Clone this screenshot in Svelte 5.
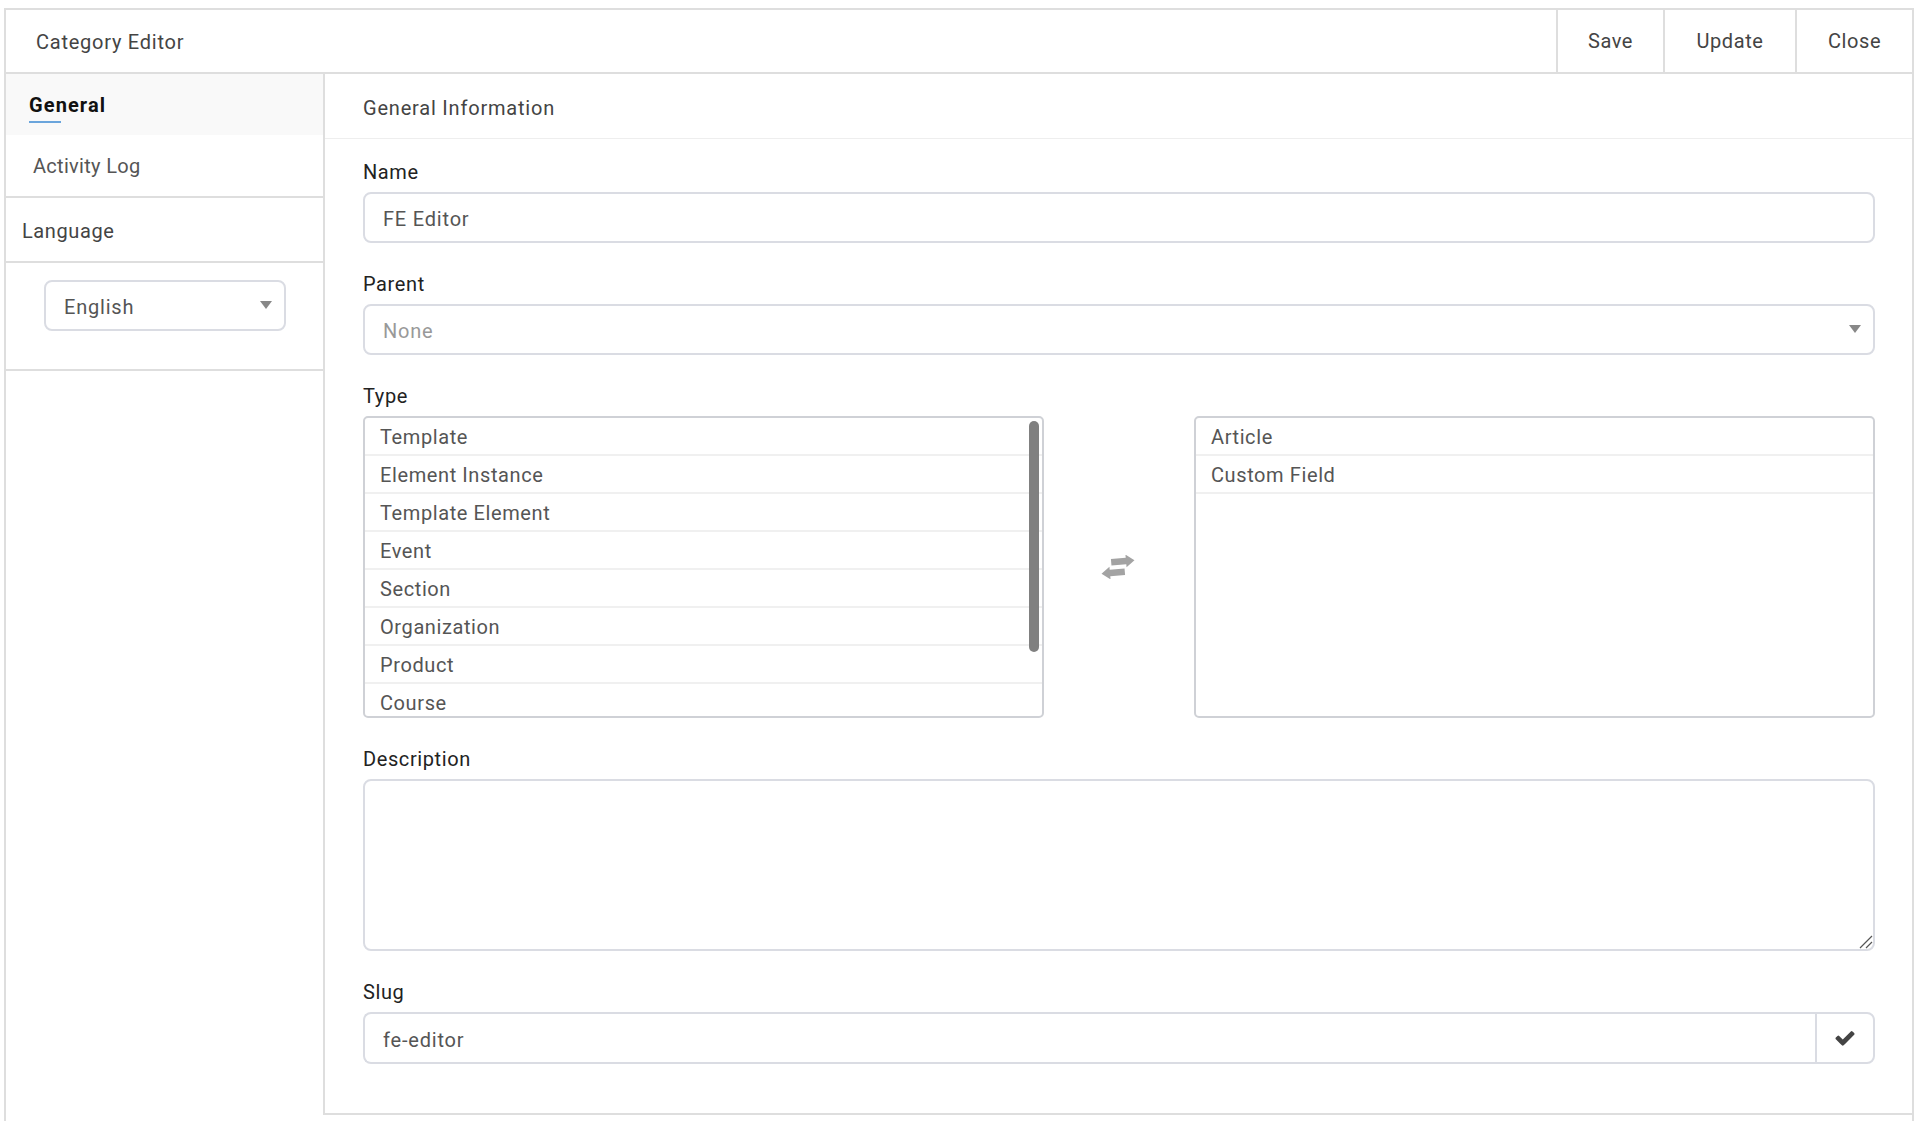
<script>
  const available = [
    "Template",
    "Element Instance",
    "Template Element",
    "Event",
    "Section",
    "Organization",
    "Product",
    "Course",
  ];
  const selected = ["Article", "Custom Field"];
</script>

<div class="frame">
  <header class="topbar">
    <h1>Category Editor</h1>
    <div class="actions">
      <button>Save</button>
      <button class="update">Update</button>
      <button class="close">Close</button>
    </div>
  </header>

  <div class="main">
    <aside class="sidebar">
      <nav>
        <a class="tab active" href="#general"><span>General</span></a>
        <a class="tab" href="#log">Activity Log</a>
      </nav>
      <div class="side-title">Language</div>
      <div class="side-body">
        <div class="select small">
          <select>
            <option>English</option>
          </select>
          <i class="caret"></i>
        </div>
      </div>
    </aside>

    <section class="content">
      <h2>General Information</h2>
      <form>
        <label for="name">Name</label>
        <input id="name" type="text" value="FE Editor" />

        <label for="parent">Parent</label>
        <div class="select">
          <select id="parent" class="muted">
            <option>None</option>
          </select>
          <i class="caret"></i>
        </div>

        <span class="label">Type</span>
        <div class="picker">
          <div class="list">
            <ul>
              {#each available as item}
                <li>{item}</li>
              {/each}
            </ul>
            <div class="thumb"></div>
          </div>
          <div class="swap">
            <svg viewBox="0 0 32 22" width="34" height="24">
              <g transform="rotate(-5 16 11)" fill="#a3a3a3">
                <path d="M10 3h14V0l8 6-8 6V9H10z" />
                <path d="M22 13H8v-3l-8 6 8 6v-3h14z" />
              </g>
            </svg>
          </div>
          <div class="list">
            <ul>
              {#each selected as item}
                <li>{item}</li>
              {/each}
            </ul>
          </div>
        </div>

        <label for="description">Description</label>
        <div class="area">
          <textarea id="description"></textarea>
          <svg class="grip" viewBox="0 0 14 14" width="14" height="14">
            <path d="M1 13 13 1M7 13l6-6" stroke="#555" stroke-width="1.200" fill="none" />
          </svg>
        </div>

        <label for="slug">Slug</label>
        <div class="group">
          <input id="slug" type="text" value="fe-editor" />
          <span class="addon">
            <svg viewBox="0 0 1792 1792" width="22" height="22">
              <path
                fill="#444"
                d="M1671 566q0 40-28 68l-724 724-136 136q-28 28-68 28t-68-28l-136-136-362-362q-28-28-28-68t28-68l136-136q28-28 68-28t68 28l294 295 656-657q28-28 68-28t68 28l136 136q28 28 28 68z"
              />
            </svg>
          </span>
        </div>
      </form>
    </section>
  </div>
</div>

<style>
  :global(body) {
    margin: 0;
    background: #fff;
    font-family: Roboto, "Liberation Sans", sans-serif;
    color: #333;
  }

  .frame {
    box-sizing: border-box;
    width: 1910px;
    height: 1113px;
    margin: 8px 0 0 4px;
    border: 2px solid #dedede;
    border-bottom: 0;
    overflow: hidden;
  }

  .topbar {
    display: flex;
    justify-content: space-between;
    height: 62px;
  }

  h1 {
    margin: 0;
    padding: 0 0 0 30px;
    font-size: 20px;
    font-weight: 400;
    line-height: 65px;
    letter-spacing: 0.75px;
    color: #444;
  }

  .actions {
    display: flex;
  }

  .actions button {
    width: 107px;
    padding: 0 0 1px;
    border: 0;
    border-left: 2px solid #dedede;
    background: none;
    font: inherit;
    font-size: 20px;
    letter-spacing: 0.6px;
    color: #444;
  }

  .actions .update {
    width: 132px;
  }

  .actions .close {
    width: 117px;
  }

  .main {
    display: flex;
    border-top: 2px solid #dedede;
    height: 1041px;
  }

  .sidebar {
    box-sizing: border-box;
    width: 317px;
    flex: none;
  }

  .tab {
    box-sizing: border-box;
    display: flex;
    align-items: center;
    height: 63px;
    padding: 1px 0 0 27px;
    font-size: 20px;
    letter-spacing: 0.3px;
    color: #555;
    text-decoration: none;
    border-bottom: 2px solid #dedede;
  }

  .tab.active {
    position: relative;
    height: 61px;
    padding: 0 0 0 23px;
    background: #f9f9f9;
    border-bottom: 0;
    font-weight: 700;
    letter-spacing: 1.1px;
    color: #111;
  }

  .tab.active span::after {
    content: "";
    position: absolute;
    left: 23px;
    bottom: 12px;
    width: 32px;
    height: 2px;
    background: #6aa5dc;
  }

  .side-title {
    box-sizing: border-box;
    display: flex;
    align-items: center;
    height: 65px;
    padding: 2px 0 0 16px;
    border-bottom: 2px solid #dedede;
    font-size: 20px;
    letter-spacing: 0.6px;
    color: #444;
  }

  .side-body {
    box-sizing: border-box;
    height: 108px;
    padding: 17px 0 0 38px;
    border-bottom: 2px solid #dedede;
  }

  .content {
    flex: 1;
    height: 1041px;
    box-sizing: border-box;
    border-left: 2px solid #dedede;
    border-bottom: 2px solid #dedede;
  }

  h2 {
    margin: 0;
    height: 60px;
    padding: 4px 0 0 38px;
    font-size: 20px;
    font-weight: 400;
    line-height: 61px;
    letter-spacing: 0.8px;
    color: #444;
    border-bottom: 1px solid #eee;
  }

  form {
    display: flex;
    flex-direction: column;
    padding: 20px 37px 0 38px;
  }

  label,
  .label {
    height: 33px;
    font-size: 20px;
    line-height: 26px;
    letter-spacing: 0.6px;
    color: #222;
  }

  input,
  select,
  textarea {
    box-sizing: border-box;
    width: 100%;
    height: 51px;
    padding: 3px 18px 0;
    border: 2px solid #dadce3;
    border-radius: 8px;
    background: #fff;
    font: inherit;
    font-size: 20px;
    letter-spacing: 0.8px;
    color: #555;
    outline: none;
  }

  input,
  .select {
    margin-bottom: 28px;
  }

  .select {
    position: relative;
  }

  select {
    appearance: none;
  }

  select.muted {
    color: #999;
  }

  .select.small {
    width: 242px;
    margin: 0;
  }

  .caret {
    position: absolute;
    right: 14px;
    top: 21px;
    width: 0;
    height: 0;
    border: 6px solid transparent;
    border-top: 8px solid #888;
    border-bottom: 0;
  }

  .picker {
    display: flex;
    margin-bottom: 28px;
  }

  .list {
    position: relative;
    box-sizing: border-box;
    width: 681px;
    height: 302px;
    flex: none;
    overflow: hidden;
    border: 2px solid #cfd1d6;
    border-radius: 5px;
  }

  ul {
    margin: 0;
    padding: 0;
    list-style: none;
  }

  li {
    box-sizing: border-box;
    height: 38px;
    padding-left: 15px;
    border-bottom: 2px solid #f0f0f0;
    font-size: 20px;
    line-height: 38px;
    letter-spacing: 0.6px;
    color: #555;
  }

  .thumb {
    position: absolute;
    top: 3px;
    right: 3px;
    width: 10px;
    height: 231px;
    border-radius: 5px;
    background: #808080;
  }

  .swap {
    flex: 1;
    display: flex;
    align-items: center;
    justify-content: center;
    padding-right: 2px;
  }

  .area {
    position: relative;
    margin-bottom: 28px;
  }

  textarea {
    height: 172px;
    padding: 12px 18px;
    display: block;
    resize: none;
  }

  .grip {
    position: absolute;
    right: 2px;
    bottom: 2px;
  }

  .group {
    display: flex;
  }

  .group input {
    flex: 1;
    height: 52px;
    margin: 0;
    border-radius: 8px 0 0 8px;
    border-right: 0;
  }

  .addon {
    box-sizing: border-box;
    display: flex;
    align-items: center;
    justify-content: center;
    width: 60px;
    height: 52px;
    border: 2px solid #dadce3;
    border-radius: 0 8px 8px 0;
  }
</style>
